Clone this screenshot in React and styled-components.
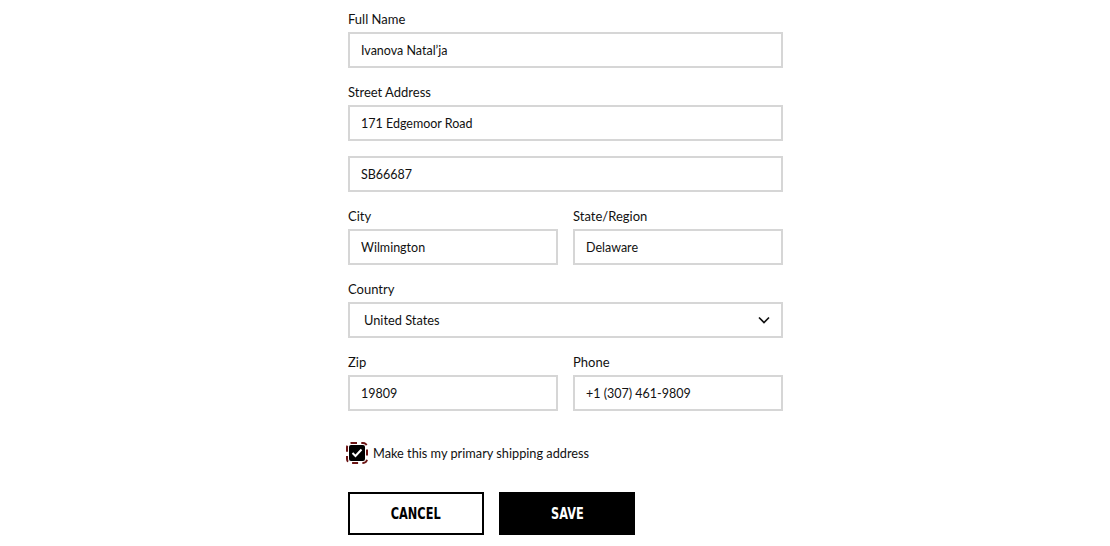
import React from "react";
import styled, { createGlobalStyle } from "styled-components";

const Global = createGlobalStyle`
  html, body { margin: 0; padding: 0; background: #fff; }
  body { font-family: "Lato", "Open Sans", sans-serif; color: #111; }
  * { box-sizing: border-box; }
`;

const Page = styled.div`
  display: flex;
  justify-content: center;
  padding: 10px 0 0 0;
`;

const Form = styled.form`
  width: 435px;
  margin-left: 21px;
  display: flex;
  flex-direction: column;
  gap: 15px;
`;

const Row = styled.div`
  display: grid;
  grid-template-columns: 210px 210px;
  gap: 15px;
`;

const Field = styled.div`
  display: flex;
  flex-direction: column;
`;

const Label = styled.label`
  font-size: 13px;
  line-height: 18px;
  margin-bottom: 4px;
  color: #111;
`;

const Input = styled.input`
  height: 36px;
  width: 100%;
  border: 2px solid #d6d6d6;
  padding: 0 0 0 11px;
  font-family: "Lato", sans-serif;
  font-size: 12.5px;
  color: #111;
  background: #fff;
  outline: none;
`;

const SelectBox = styled.div`
  height: 36px;
  border: 2px solid #d6d6d6;
  display: flex;
  align-items: center;
  justify-content: space-between;
  padding: 0 11px 0 14px;
  font-size: 12.8px;
  color: #111;
`;

const CheckRow = styled.div`
  display: flex;
  align-items: center;
  gap: 8px;
  margin-top: 19px;
  font-size: 12.75px;
`;

const CheckBox = styled.span`
  width: 16px;
  height: 16px;
  border-radius: 2px;
  background: #000;
  display: flex;
  align-items: center;
  justify-content: center;
  outline: 2px dashed #6b1515;
  outline-offset: 1px;
  margin-left: 1px;
`;

const Buttons = styled.div`
  display: flex;
  gap: 15px;
  margin-top: 16px;
`;

const Button = styled.button`
  width: 136px;
  height: 43px;
  border: 2px solid #000;
  background: ${(p) => (p.$primary ? "#000" : "#fff")};
  color: ${(p) => (p.$primary ? "#fff" : "#000")};
  font-family: "DejaVu Sans Condensed", "DejaVu Sans", sans-serif;
  font-weight: bold;
  font-size: 15px;
  cursor: pointer;
  padding: 0;
`;

const ButtonText = styled.span`
  display: inline-block;
  transform: scaleX(0.84);
`;

export default function App() {
  return (
    <>
      <Global />
      <Page>
        <Form>
          <Field>
            <Label>Full Name</Label>
            <Input defaultValue="Ivanova Natal’ja" />
          </Field>
          <Field>
            <Label>Street Address</Label>
            <Input defaultValue="171 Edgemoor Road" />
          </Field>
          <Input defaultValue="SB66687" />
          <Row>
            <Field>
              <Label>City</Label>
              <Input defaultValue="Wilmington" />
            </Field>
            <Field>
              <Label>State/Region</Label>
              <Input defaultValue="Delaware" />
            </Field>
          </Row>
          <Field>
            <Label>Country</Label>
            <SelectBox>
              <span>United States</span>
              <svg width="12" height="8" viewBox="0 0 12 8" fill="none">
                <path d="M1 1.5 L6 6.5 L11 1.5" stroke="#111" strokeWidth="1.7" />
              </svg>
            </SelectBox>
          </Field>
          <Row>
            <Field>
              <Label>Zip</Label>
              <Input defaultValue="19809" />
            </Field>
            <Field>
              <Label>Phone</Label>
              <Input defaultValue="+1 (307) 461-9809" />
            </Field>
          </Row>
          <CheckRow>
            <CheckBox>
              <svg width="12" height="10" viewBox="0 0 12 10" fill="none">
                <path d="M1.5 5 L4.5 8 L10.5 1.5" stroke="#fff" strokeWidth="2" />
              </svg>
            </CheckBox>
            <span>Make this my primary shipping address</span>
          </CheckRow>
          <Buttons>
            <Button type="button"><ButtonText>CANCEL</ButtonText></Button>
            <Button type="button" $primary><ButtonText>SAVE</ButtonText></Button>
          </Buttons>
        </Form>
      </Page>
    </>
  );
}
